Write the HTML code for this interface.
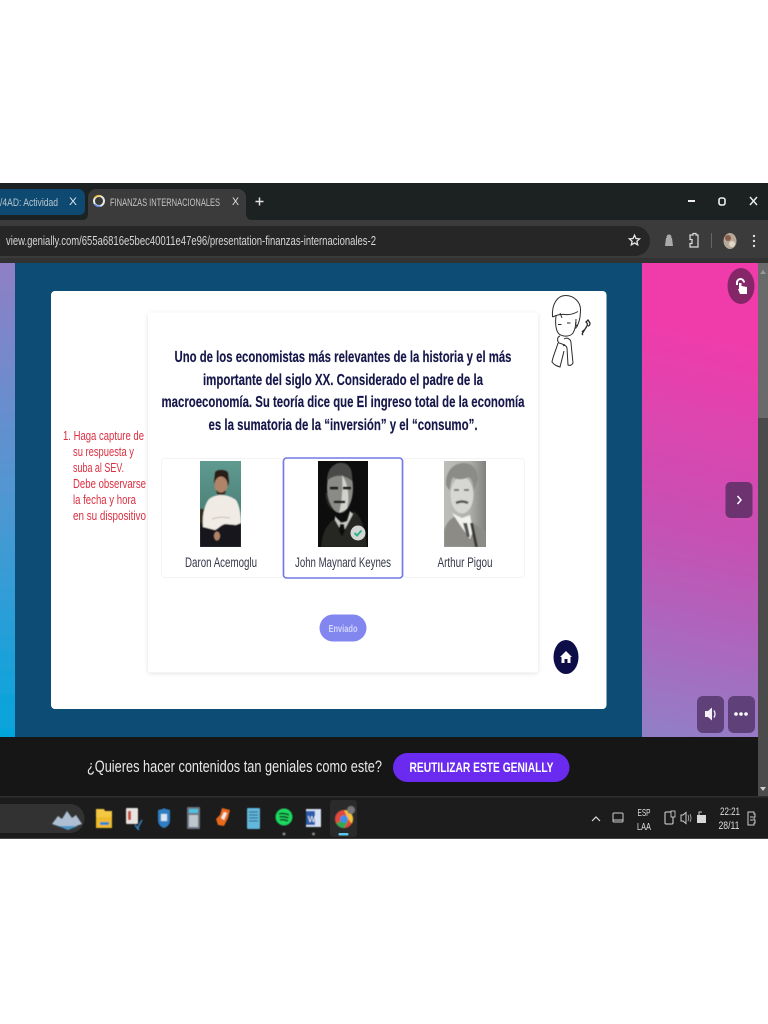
<!DOCTYPE html>
<html lang="es"><head><meta charset="utf-8"><title>Genially</title>
<style>html,body{margin:0;padding:0;background:#fff;width:768px;height:1024px;overflow:hidden}svg{display:block}text{font-family:"Liberation Sans",sans-serif}</style></head>
<body>
<svg width="768" height="1024" viewBox="0 0 768 1024" xmlns="http://www.w3.org/2000/svg">
<defs>
<linearGradient id="gl" x1="0" y1="0" x2="0" y2="1"><stop offset="0" stop-color="#8f7fc6"/><stop offset=".5" stop-color="#4f97d2"/><stop offset="1" stop-color="#04a5dc"/></linearGradient>
<linearGradient id="gr" gradientUnits="userSpaceOnUse" x1="745" y1="340" x2="655" y2="745"><stop offset="0" stop-color="#f03bab"/><stop offset=".5" stop-color="#c452b4"/><stop offset="1" stop-color="#8f80c8"/></linearGradient>
<linearGradient id="pg" x1="0" y1="0" x2="1" y2="0"><stop offset="0" stop-color="#bdbdb9"/><stop offset=".6" stop-color="#b0b0ac"/><stop offset="1" stop-color="#80807c"/></linearGradient>
<filter id="soft" x="0" y="0" width="100%" height="100%"><feGaussianBlur stdDeviation=".35"/></filter>
<filter id="b1"><feGaussianBlur stdDeviation=".6"/></filter>
<filter id="b2"><feGaussianBlur stdDeviation="1.400"/></filter>
<filter id="sh" x="-5%" y="-5%" width="110%" height="110%"><feDropShadow dx="0" dy="1" stdDeviation="2" flood-color="#000" flood-opacity=".12"/></filter>
<linearGradient id="pp" x1="0" y1="0" x2="0" y2="1"><stop offset="0" stop-color="#5f9a90"/><stop offset="1" stop-color="#3f7068"/></linearGradient>
</defs>
<g filter="url(#soft)">
<rect width="768" height="1024" fill="#fff"/>
<rect y="183" width="768" height="37" fill="#1f2020"/>
<rect y="220" width="768" height="42" fill="#3a3a3a"/>
<rect y="258" width="768" height="5" fill="#333"/>
<path d="M0 189H78a7 7 0 0 1 7 7V210a5 5 0 0 1-5 5H0Z" fill="#0f4a70"/>
<path d="M82 220c4 0 6-2 6-7V197a8 8 0 0 1 8-8H238a8 8 0 0 1 8 8V213c0 5 2 7 6 7Z" fill="#3a3a3a"/>
<text x="0" y="206" font-size="11" fill="#b9c7d0" textLength="58" lengthAdjust="spacingAndGlyphs">/4AD: Actividad</text>
<text x="69" y="205" font-size="11" fill="#dbe5ec" textLength="8" lengthAdjust="spacingAndGlyphs">X</text>
<circle cx="99" cy="201" r="5" fill="none" stroke="#e8e8e8" stroke-width="2"/>
<path d="M94.500 198a5 5 0 0 1 6-2" stroke="#f0c33c" stroke-width="1.500" fill="none"/>
<path d="M94.500 204a5 5 0 0 0 6 2" stroke="#5b8dea" stroke-width="1.500" fill="none"/>
<text x="110" y="206" font-size="11" fill="#c4c4c4" textLength="110" lengthAdjust="spacingAndGlyphs">FINANZAS INTERNACIONALES</text>
<text x="232" y="205" font-size="11" fill="#e2e2e2" textLength="7" lengthAdjust="spacingAndGlyphs">X</text>
<path d="M255.500 201.500h8M259.500 197.500v8" stroke="#e0e0e0" stroke-width="1.500"/>
<path d="M688 201h7" stroke="#eee" stroke-width="2"/>
<rect x="719" y="198" width="6" height="7" rx="2" fill="none" stroke="#eee" stroke-width="1.600"/>
<path d="M750 197l7 8M757 197l-7 8" stroke="#eee" stroke-width="1.400"/>

<rect x="-20" y="226" width="670" height="30" rx="15" fill="#272727"/>
<text x="6" y="245" font-size="12.500" fill="#d6d6d6" textLength="370" lengthAdjust="spacingAndGlyphs">view.genially.com/655a6816e5bec40011e47e96/presentation-finanzas-internacionales-2</text>
<path d="M634.500 235.200l1.500 3.300 3.600.4-2.700 2.400.8 3.500-3.200-1.800-3.200 1.800.8-3.500-2.700-2.400 3.600-.4Z" fill="none" stroke="#e6e6e6" stroke-width="1.300"/>
<path d="M666 238h6l1 8h-8Z" fill="#aaa"/><circle cx="669" cy="237" r="2.500" fill="#aaa"/>
<path d="M690 235h3v-1.500h3V235h2v12h-8v-3.500h2v-4h-2Z" fill="none" stroke="#ddd" stroke-width="1.200"/>
<rect x="711" y="233" width="1" height="15" fill="#666"/>
<ellipse cx="730" cy="241" rx="6.500" ry="8" fill="#b8a898"/><ellipse cx="728" cy="238" rx="3" ry="3" fill="#8a5b4a"/><ellipse cx="732" cy="244" rx="3" ry="3" fill="#dcd8c8"/>
<circle cx="754" cy="236" r="1.200" fill="#ddd"/><circle cx="754" cy="241" r="1.200" fill="#ddd"/><circle cx="754" cy="246" r="1.200" fill="#ddd"/>

<rect y="263" width="15" height="474" fill="url(#gl)"/>
<rect x="15" y="263" width="627" height="474" fill="#0b4e75"/>
<rect x="642" y="263" width="116" height="474" fill="url(#gr)"/>
<rect x="758" y="263" width="10" height="534" fill="#4b4b4b"/>
<rect x="758" y="263" width="10" height="155" fill="#6a6a6a"/>
<path d="M763 270l-3 4h6Z" fill="#999"/><path d="M763 791l-3-4h6Z" fill="#ccc"/>

<ellipse cx="741" cy="286" rx="13.500" ry="18" fill="#842868"/>
<path d="M737 285v-2.500a3.500 3.500 0 0 1 7 0" fill="none" stroke="#fff" stroke-width="2"/>
<path d="M739 283h2.500v3l5.500 1v7h-7l-2-5h1Z" fill="#fff"/>

<rect x="725.500" y="482" width="27" height="36" rx="5" fill="#6d3270"/>
<path d="M737.500 496l3.500 4-3.500 4" fill="none" stroke="#fff" stroke-width="1.500"/>
<rect x="697" y="696" width="27" height="37" rx="6" fill="#5f3f78"/>
<path d="M705 711h3l4-3.500v13l-4-3.500h-3Z" fill="#f4f0f6"/><path d="M714 710.500q2 3.500 0 7" fill="none" stroke="#f4f0f6" stroke-width="1.300"/>
<rect x="728" y="696" width="27" height="37" rx="6" fill="#5f3f78"/>
<circle cx="736" cy="714" r="1.800" fill="#fff"/><circle cx="741" cy="714" r="1.800" fill="#fff"/><circle cx="746" cy="714" r="1.800" fill="#fff"/>

<rect x="51" y="291" width="555.500" height="418" rx="4" fill="#fff"/>
<rect x="148" y="312.500" width="390" height="360" rx="3" fill="#fff" filter="url(#sh)"/>

<g fill="none" stroke="#2c2c2c" stroke-width="1">
<path d="M552.500 317c-1-13 5-21.500 13-21.500 9 0 15 7 15 14 0 7-1 14-5 19"/>
<path d="M552.500 317c4-2 9-3 13-2.500 5 .5 9-1 12.500-3"/>
<path d="M556 316c-1 8 0 15 3 18 4 3 11 3 14-1 2-3 3-8 3-14"/>
<path d="M560 313l2 5M558 324.500h3.500M567 323h3.500"/>
<path d="M576 322c-1 2 0 4 2 4"/>
<path d="M560 336c-3 1-3 5-1 7l6 2"/>
<path d="M558 343c-2 7-5 13-6 19 2 3 5 4 8 5l4-16"/>
<path d="M564 339c3-2 7 0 7 4l2 20c-1 2-3 3-5 2l-1-17c-1-3-3-3-4-2"/>
<path d="M582 334l5-8c1-2 0-3-1-4l2-2 2 3c0 2-1 3-2 3M583 335l-1-1M584 330l-2 2" stroke-width="1.300"/>
</g>

<g font-weight="700" fill="#14164a" font-size="16" stroke="#14164a" stroke-width=".15">
<text x="343" y="362" text-anchor="middle" textLength="337" lengthAdjust="spacingAndGlyphs">Uno de los economistas más relevantes de la historia y el más</text>
<text x="343" y="385" text-anchor="middle" textLength="280" lengthAdjust="spacingAndGlyphs">importante del siglo XX. Considerado el padre de la</text>
<text x="343" y="407" text-anchor="middle" textLength="363" lengthAdjust="spacingAndGlyphs">macroeconomía. Su teoría dice que El ingreso total de la economía</text>
<text x="343" y="430" text-anchor="middle" textLength="269" lengthAdjust="spacingAndGlyphs">es la sumatoria de la “inversión” y el “consumo”.</text>
</g>

<g font-size="13" fill="#dc2f40">
<text x="63" y="440" textLength="81" lengthAdjust="spacingAndGlyphs">1. Haga capture de</text>
<text x="73" y="456" textLength="61" lengthAdjust="spacingAndGlyphs">su respuesta y</text>
<text x="73" y="472" textLength="51" lengthAdjust="spacingAndGlyphs">suba al SEV.</text>
<text x="73" y="488" textLength="73" lengthAdjust="spacingAndGlyphs">Debe observarse</text>
<text x="73" y="504" textLength="63" lengthAdjust="spacingAndGlyphs">la fecha y hora</text>
<text x="73" y="520" textLength="73" lengthAdjust="spacingAndGlyphs">en su dispositivo</text>
</g>

<rect x="161.500" y="458.500" width="121" height="119" rx="3" fill="#fff" stroke="#f4f4f6"/>
<rect x="403.500" y="458.500" width="121" height="119" rx="3" fill="#fff" stroke="#f4f4f6"/>
<rect x="283.500" y="458" width="119" height="120" rx="3" fill="#fff" stroke="#7378ea" stroke-width="1.600"/>

<svg x="200" y="461" width="41" height="86" viewBox="0 0 41 86">
<rect width="41" height="86" fill="url(#pp)"/>
<g filter="url(#b1)">
<rect y="48" width="5" height="38" fill="#3a2a1c"/>
<path d="M0 62h41v24H0Z" fill="#14161c"/>
<path d="M15 12c0-4 12-4 13 0l1 9-1 4H15l-1-4Z" fill="#2a1d18"/>
<ellipse cx="21" cy="24" rx="6.500" ry="8.500" fill="#b08468"/>
<path d="M16 29q5 5 10 0l-1 4q-4 2-8 0Z" fill="#3a2a20"/>
<path d="M3 66c-1-10 1-22 6-28 4-3 8-4 12-4 6 0 11 2 15 5 3 4 5 14 5 23l-5 2-11-1c-4 1-6 4-10 6Z" fill="#f0ebe4"/>
<path d="M12 58q8-3 18-1" stroke="#c8c0b6" fill="none"/>
<ellipse cx="17" cy="75" rx="3" ry="4.500" fill="#b08468"/>
</g>
</svg>

<svg x="318" y="461" width="50" height="86" viewBox="0 0 50 86">
<rect width="50" height="86" fill="#0c0c0c"/>
<g filter="url(#b1)">
<path d="M3 86c1-14 6-24 15-29l9 5 9-12c8 6 12 20 13 36Z" fill="#262624"/>
<path d="M17 55l6 7 6-2 3-10 3 3-8 15-3 3-7-12Z" fill="#c9c9c5"/>
<path d="M22 63l4 0 1 7-3 6-3-6Z" fill="#0e0e0e"/>
<ellipse cx="22" cy="27" rx="13" ry="25" fill="#8a8a86"/>
<path d="M9 20C9 6 18 1 25 2c7 1 10 8 9 18-8-7-18-7-25 0Z" fill="#4a4a46"/>
<path d="M24 14c6 8 8 22 5 34l-8 4c3-10 4-26 3-38Z" fill="#d2d2cc"/>
<path d="M9 32c1 8 3 14 6 18-5-3-8-10-8-18Z" fill="#222"/>
</g>
<g filter="url(#b1)">
<path d="M12 27h8M25 27h8" stroke="#1c1c1c" stroke-width="2.500"/>
<path d="M16 41h11" stroke="#1c1c1c" stroke-width="2.200"/>
</g>
<circle cx="40" cy="72" r="7.500" fill="#d4d6d4"/>
<path d="M36.500 72l2.500 2.500 4.500-5" fill="none" stroke="#2fb38a" stroke-width="2"/>
</svg>

<svg x="444" y="461" width="42" height="86" viewBox="0 0 42 86">
<rect width="42" height="86" fill="url(#pg)"/>
<g filter="url(#b1)">
<path d="M0 86V70c2-8 6-12 12-15l10 4 10 5 10 6v16Z" fill="#8c8b86"/>
<path d="M8 52l10 5 8-3 3 16-3 8-10-14Z" fill="#f0f0ec"/>
<path d="M19 62l4 0 3 14-3 0Z" fill="#555"/>
<path d="M29 62l5 24h-3l-5-24Z" fill="#3a3a38"/>
<ellipse cx="18" cy="34" rx="11.500" ry="18.500" fill="#d6d6d2"/>
<path d="M2 24C1 10 10 2 20 2c8 0 14 6 14 16l-4 12c0-8-2-12-5-14-6 3-13 3-16 0-2 4-3 8-3 13-2-1-3-3-4-5Z" fill="#8b8b87"/>
<path d="M10 29h5M20 29h5" stroke="#555" stroke-width="1.500"/>
<path d="M12 42q6-3 12 0" stroke="#555" stroke-width="2.500" fill="none"/>
</g>
</svg>

<g font-size="13.500" fill="#353849">
<text x="221" y="567" text-anchor="middle" textLength="72" lengthAdjust="spacingAndGlyphs">Daron Acemoglu</text>
<text x="343" y="567" text-anchor="middle" textLength="96" lengthAdjust="spacingAndGlyphs">John Maynard Keynes</text>
<text x="465" y="567" text-anchor="middle" textLength="55" lengthAdjust="spacingAndGlyphs">Arthur Pigou</text>
</g>

<rect x="319.500" y="614.500" width="47" height="27" rx="13.500" fill="#8287f0"/>
<text x="343" y="632" text-anchor="middle" font-size="10" font-weight="700" fill="#d4d6fa" textLength="29" lengthAdjust="spacingAndGlyphs">Enviado</text>

<ellipse cx="566" cy="657" rx="12.500" ry="17" fill="#0b0747"/>
<path d="M560 657l6-6 6 6h-1.500v6h-3v-4h-3v4h-3v-6Z" fill="#fff"/>

<rect y="737" width="758" height="60" fill="#141414"/>
<text x="87" y="772" font-size="16.500" fill="#e8e8e8" textLength="295" lengthAdjust="spacingAndGlyphs">¿Quieres hacer contenidos tan geniales como este?</text>
<rect x="393" y="753" width="176.500" height="29" rx="14.500" fill="#6a2cf0"/>
<text x="481.500" y="772" text-anchor="middle" font-size="14" font-weight="700" fill="#fff" textLength="144" lengthAdjust="spacingAndGlyphs">REUTILIZAR ESTE GENIALLY</text>

<rect y="797" width="768" height="41" fill="#1b1b1b"/>
<rect y="796" width="768" height="1.500" fill="#2e2e2e"/>
<rect y="838" width="768" height="1" fill="#444"/>
<path d="M0 804H70a14.500 14.500 0 0 1 0 29H0Z" fill="#333"/>
<g filter="url(#b1)">
<path d="M52 824l6-8 4 3 5-8 5 7 4-3 6 9-15 5Z" fill="#aebfd4"/><path d="M58 826h20l-10 4Z" fill="#4a97c8"/>
<path d="M96 809h8l1 2h7v8h-16Z" fill="#f5c842"/><path d="M96 817h16v11h-16Z" fill="#f0bb2c"/><rect x="100" y="822" width="9" height="3" fill="#2f88c8"/>
<rect x="126" y="808" width="12" height="16" rx="1" fill="#e8e4e0"/><rect x="128" y="811" width="3" height="9" fill="#c6493a"/><path d="M135 825l4 5M142 820l-5 9" stroke="#2f88c8" stroke-width="1.500"/>
<path d="M158 810q6-1 6-2 1 1 6 2v10q0 6-6 8-6-2-6-8Z" fill="#2f7fc4"/><rect x="161" y="814" width="6" height="7" fill="#d8e6f2"/>
<rect x="187" y="807" width="13" height="22" rx="1" fill="#6b7680"/><rect x="189" y="809" width="9" height="4" fill="#4fc0e0"/><rect x="189" y="815" width="9" height="12" fill="#bfc6cc"/>
<path d="M222 808l8 2-2 8-4 8-6-1-2-6 4-4Z" fill="#ea6a1e"/><path d="M224 812l3 1-3 7-3-2Z" fill="#eee"/>
<rect x="247" y="808" width="13" height="21" rx="1" fill="#62b8dc"/><path d="M249 812h9M249 815h9M249 818h9M249 821h9" stroke="#265a78"/>
<circle cx="284" cy="817" r="8.500" fill="#1ed760"/><path d="M279 814q5-1.500 10 1M279.500 817q4.500-1 9 1M280 820q4-1 8 1" stroke="#111" stroke-width="1.300" fill="none"/>
<rect x="306" y="809" width="15" height="18" fill="#d6e2f4"/><rect x="306" y="811" width="9" height="14" fill="#2a5caa"/>
<text x="308" y="822" font-size="8" fill="#fff">W</text>
<circle cx="284" cy="834" r="1.500" fill="#888"/><circle cx="313.500" cy="834" r="1.500" fill="#888"/>
</g>
<rect x="330" y="800" width="27" height="37" rx="3" fill="#2c2c2c"/>
<g filter="url(#b1)">
<circle cx="344" cy="819" r="9" fill="#e0483a"/>
<path d="M344 819l-7.800 4.500a9 9 0 0 0 7.800 4.500l4-7Z" fill="#34a853"/>
<path d="M344 810a9 9 0 0 1 7.800 13.500L348 819Z" fill="#f5c33b"/>
<circle cx="344" cy="819" r="3.800" fill="#3e8df0"/>
<circle cx="351" cy="810" r="4" fill="#777"/>
</g>
<rect x="338.500" y="833" width="10" height="2.500" rx="1" fill="#5ac8f0"/>

<path d="M592 821l4-4 4 4" fill="none" stroke="#ddd" stroke-width="1.200"/>
<rect x="613" y="813" width="10" height="9" rx="1" fill="none" stroke="#ccc"/><path d="M613 820h10" stroke="#ccc"/>
<text x="644" y="816" text-anchor="middle" font-size="10.500" fill="#ddd" textLength="13" lengthAdjust="spacingAndGlyphs">ESP</text>
<text x="644" y="830" text-anchor="middle" font-size="10.500" fill="#ddd" textLength="14" lengthAdjust="spacingAndGlyphs">LAA</text>
<rect x="665" y="812" width="8" height="12" rx="1" fill="none" stroke="#ddd"/><rect x="671" y="811" width="4" height="6" fill="#1b1b1b" stroke="#ddd" stroke-width=".8"/>
<path d="M681 815h2l3-2.500v11l-3-2.500h-2Z" fill="none" stroke="#ccc"/><path d="M688 815q1.500 3 0 6M690 814q2 4 0 8" fill="none" stroke="#bbb" stroke-width=".8"/>
<path d="M697 815h9v8h-9Z" fill="#d8d8d8"/><path d="M699 815v-3h3" fill="none" stroke="#ccc"/>
<text x="730" y="815" text-anchor="middle" font-size="11" fill="#ddd" textLength="20" lengthAdjust="spacingAndGlyphs">22:21</text>
<text x="729" y="829" text-anchor="middle" font-size="11" fill="#ddd" textLength="21" lengthAdjust="spacingAndGlyphs">28/11</text>
<path d="M748 812h6v2h1v3h-1v3h1v3h-1v2h-6Z" fill="none" stroke="#ccc"/><path d="M750 817h3M750 820h3" stroke="#ccc"/>
</g>
</svg>
</body></html>
